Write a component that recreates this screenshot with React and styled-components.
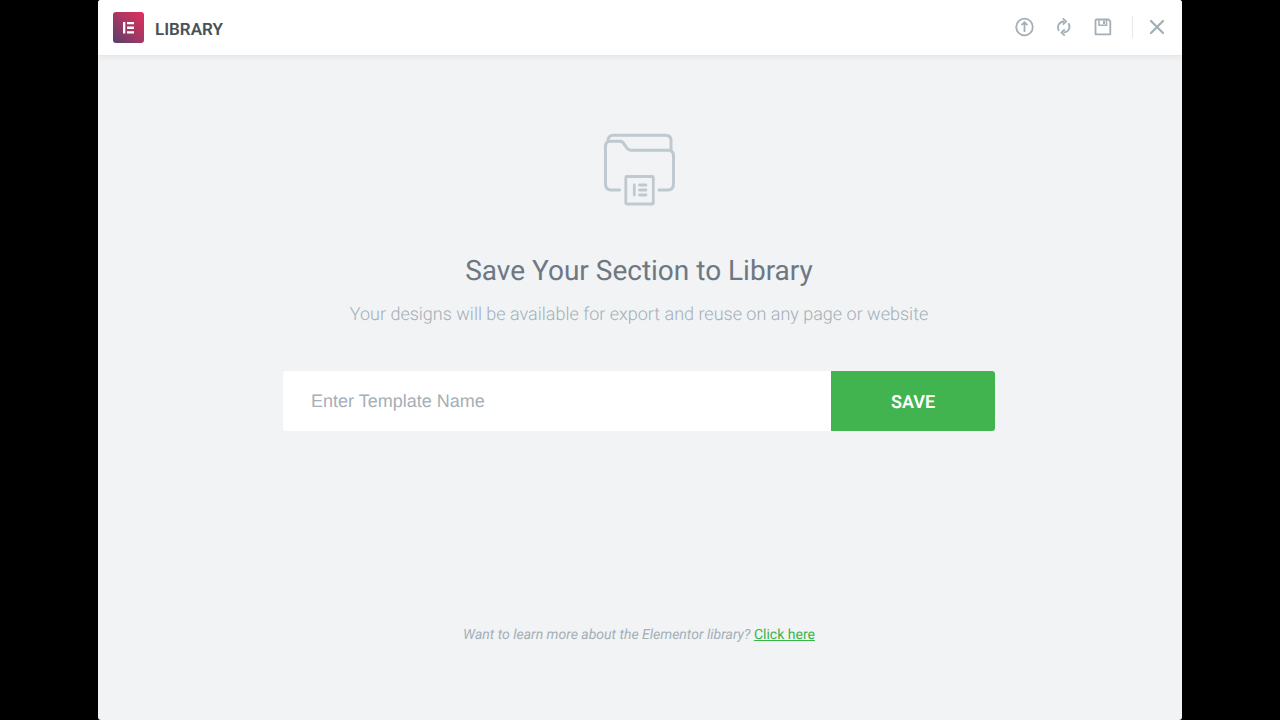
import React, { useState } from "react";
import styled, { createGlobalStyle } from "styled-components";

const GlobalStyle = createGlobalStyle`
  * {
    box-sizing: border-box;
  }
  body {
    margin: 0;
    background: #000;
    font-family: Roboto, "Liberation Sans", sans-serif;
    text-rendering: geometricPrecision;
  }
`;

const Backdrop = styled.div`
  display: flex;
  min-height: 100vh;
  padding: 0 98px;
`;
const Modal = styled.div`
  display: flex;
  flex: 1;
  flex-direction: column;
  background: #f1f3f5;
  border-radius: 3px;
  overflow: hidden;
`;
const Header = styled.header`
  display: flex;
  align-items: center;
  justify-content: space-between;
  height: 55px;
  padding: 0 15px;
  background: #fff;
  box-shadow: 0 0 8px rgba(0, 0, 0, 0.1);
`;
const Brand = styled.div`
  display: flex;
  align-items: center;
  gap: 11px;
`;
const BrandName = styled.span`
  padding-top: 4px;
  color: #495157;
  font-size: 17px;
  font-weight: 600;
  line-height: 20px;
`;
const Actions = styled.div`
  display: flex;
  align-items: center;
  gap: 19px;
  padding-bottom: 1px;
`;
const IconButton = styled.button`
  display: flex;
  padding: 0;
  border: 0;
  background: none;
  color: #a4afb7;
  cursor: pointer;
`;
const CloseArea = styled.div`
  display: flex;
  align-items: center;
  height: 22px;
  padding-left: 14px;
  border-left: 1px solid #e6e9ec;
`;
const Content = styled.main`
  display: flex;
  flex: 1;
  flex-direction: column;
  align-items: center;
  padding: 78px 22px 75px 20px;
  text-align: center;
`;
const Title = styled.h1`
  margin: 47px 0 14px;
  color: #6d7882;
  font-size: 28px;
  font-weight: 400;
  line-height: 36px;
`;
const Message = styled.p`
  margin: 0 0 44px;
  color: #a4afb7;
  font-size: 18px;
  font-weight: 300;
  line-height: 24px;
`;
const SaveForm = styled.form`
  display: flex;
  width: 100%;
  max-width: 712px;
  height: 60px;
`;
const NameInput = styled.input`
  flex: 1;
  min-width: 0;
  padding: 0 28px;
  border: 0;
  border-radius: 3px 0 0 3px;
  background: #fff;
  color: #6d7882;
  font-family: "Liberation Sans", Arial, sans-serif;
  font-size: 18px;
  text-rendering: inherit;

  &::placeholder {
    color: #a4afb7;
  }
`;
const SaveButton = styled.button`
  width: 164px;
  padding: 2px 0 0;
  border: 0;
  border-radius: 0 3px 3px 0;
  background: #41b450;
  color: #fff;
  font-family: inherit;
  font-size: 18px;
  font-weight: 600;
  text-rendering: inherit;
  cursor: pointer;
`;
const Footnote = styled.p`
  margin: auto 0 0;
  color: #a4afb7;
  font-size: 14px;
  line-height: 20px;
`;
const LearnLink = styled.a`
  color: #39b54a;
`;

function Logo() {
  return (
    <svg width="31" height="31" viewBox="0 0 31 31" aria-hidden="true">
      <defs>
        <linearGradient id="brand" x1="0" y1="1" x2="1" y2="0">
          <stop offset="0" stopColor="#54406b" />
          <stop offset="0.5" stopColor="#a33863" />
          <stop offset="1" stopColor="#e12f5d" />
        </linearGradient>
      </defs>
      <rect width="31" height="31" rx="3" fill="url(#brand)" />
      <path
        d="M10 10h2.300v11.500h-2.300zM14 10h7v2.300h-7zM14 14.600h7v2.300h-7zM14 19.200h7v2.300h-7z"
        fill="#fff"
      />
    </svg>
  );
}

function ActionIcon({ children }) {
  return (
    <svg
      width="20"
      height="20"
      viewBox="0 0 20 20"
      fill="none"
      stroke="currentColor"
      strokeWidth="1.8"
      aria-hidden="true"
    >
      {children}
    </svg>
  );
}

function FolderIcon() {
  return (
    <svg
      width="73"
      height="73"
      viewBox="0 0 73 73"
      fill="none"
      stroke="#bfc9d0"
      strokeWidth="3"
      strokeLinecap="round"
      strokeLinejoin="round"
      aria-hidden="true"
    >
      <path d="M5 7.5C5 4.500 7 2.300 10 2.300H62.500Q68 2.300 68 7.500V16" />
      <path d="M16.500 57H8.500Q2.500 57 2.500 51V13.500Q2.500 8.300 7.500 8.300H17C23 8.300 21.500 17.300 28 17.300H65Q70.500 17.300 70.500 23V51Q70.500 57 64.500 57H56" />
      <rect x="22.800" y="43.500" width="27.500" height="27.500" rx="1" strokeWidth="2.800" />
      <path d="M31.300 52v10M36.500 52h6.500M36.500 57h6.500M36.500 62h6.500" strokeWidth="2.800" />
    </svg>
  );
}

function App() {
  const [name, setName] = useState("");

  return (
    <>
      <GlobalStyle />
      <Backdrop>
        <Modal role="dialog" aria-label="Library">
          <Header>
            <Brand>
              <Logo />
              <BrandName>LIBRARY</BrandName>
            </Brand>
            <Actions>
              <IconButton type="button" aria-label="Import template">
                <ActionIcon>
                  <circle cx="9.500" cy="10" r="8.300" />
                  <path d="M9.500 15V5.500M6.500 8.200L9.500 5.200l3 3" />
                </ActionIcon>
              </IconButton>
              <IconButton type="button" aria-label="Sync library">
                <ActionIcon>
                  <path d="M5 13.700C2.500 9.500 4.800 4.800 10 4.500M14.500 6.300C17 10.500 14.700 15.200 9.500 15.500" />
                  <path d="M8.800 1.300L12 4.400L8.800 7.600M10.700 12.400L7.500 15.600L10.700 18.700" />
                </ActionIcon>
              </IconButton>
              <IconButton type="button" aria-label="Save template">
                <ActionIcon>
                  <path
                    d="M3.500 2.500H15.500L17.300 4.300V17.300H2.500V3.500Q2.500 2.500 3.500 2.500z"
                    strokeLinejoin="round"
                  />
                  <path d="M6 2.500V8.300H13.500V2.500" strokeWidth="1.500" />
                  <path d="M11 3.500v3.500" strokeWidth="2" />
                </ActionIcon>
              </IconButton>
              <CloseArea>
                <IconButton type="button" aria-label="Close">
                  <ActionIcon>
                    <path
                      d="M4 4L16 16M16 4L4 16"
                      strokeWidth="2.300"
                      strokeLinecap="round"
                    />
                  </ActionIcon>
                </IconButton>
              </CloseArea>
            </Actions>
          </Header>
          <Content>
            <FolderIcon />
            <Title>Save Your Section to Library</Title>
            <Message>
              Your designs will be available for export and reuse on any page or
              website
            </Message>
            <SaveForm onSubmit={(e) => e.preventDefault()}>
              <NameInput
                type="text"
                name="title"
                aria-label="Template name"
                placeholder="Enter Template Name"
                value={name}
                onChange={(e) => setName(e.target.value)}
                required
              />
              <SaveButton type="submit">SAVE</SaveButton>
            </SaveForm>
            <Footnote>
              <em>Want to learn more about the Elementor library?</em>{" "}
              <LearnLink href="#learn">Click here</LearnLink>
            </Footnote>
          </Content>
        </Modal>
      </Backdrop>
    </>
  );
}

export default App;
